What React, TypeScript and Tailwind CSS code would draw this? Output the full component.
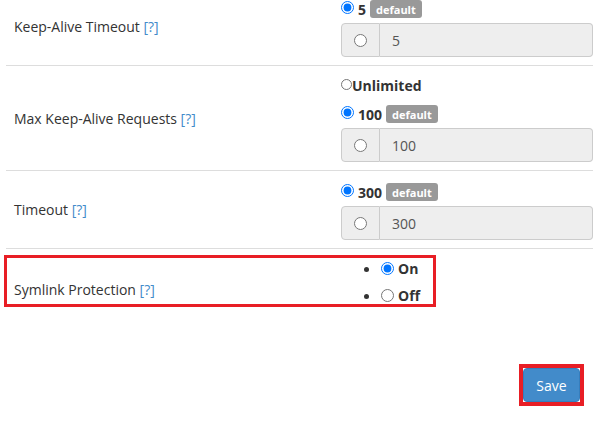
import React from "react";

const font = { fontFamily: '"Open Sans", "Liberation Sans", sans-serif' };

function Help() {
  return <span className="text-[#428bca]">[?]</span>;
}

function Badge() {
  return (
    <span className="ml-[4px] inline-flex h-[18px] items-center rounded-[3px] bg-[#999] px-[6px] text-[11px] font-bold leading-none text-white">
      default
    </span>
  );
}

function DefaultOption({ value, name }: { value: string; name: string }) {
  return (
    <label className="flex h-[20px] items-center text-[14px] font-bold text-[#333]">
      <input
        type="radio"
        name={name}
        defaultChecked
        className="m-0 mr-[4px] mt-[-3px] h-[13px] w-[13px]"
      />
      {value}
      <Badge />
    </label>
  );
}

function CustomInput({ value, name }: { value: string; name: string }) {
  return (
    <div className="mt-[4px] flex h-[34px]">
      <span className="flex w-[39px] items-center justify-center rounded-l-[4px] border border-[#ccc] bg-[#eee]">
        <input type="radio" name={name} className="m-0 h-[13px] w-[13px]" />
      </span>
      <input
        type="text"
        disabled
        defaultValue={value}
        className="min-w-0 flex-1 rounded-r-[4px] border border-l-0 border-[#ccc] bg-[#eee] px-[12px] text-[14px] text-[#555]"
        style={font}
      />
    </div>
  );
}

function Row({
  label,
  children,
  last,
  className = "",
}: {
  label: string;
  children: React.ReactNode;
  last?: boolean;
  className?: string;
}) {
  return (
    <div
      className={`relative flex items-center ${last ? "" : "border-b border-[#ddd]"} ${className}`}
    >
      <div className="w-[335px] shrink-0 pl-[8px] text-[14px] text-[#333]">
        {label} <Help />
      </div>
      <div className="flex-1">{children}</div>
    </div>
  );
}

export default function App() {
  return (
    <div className="h-[426px] overflow-hidden bg-white px-[6px]" style={font}>
      <Row label="Keep-Alive Timeout" className="-mt-[12px]">
        <div className="pb-[8px] pt-[11px]">
          <DefaultOption value="5" name="kat" />
          <CustomInput value="5" name="kat" />
        </div>
      </Row>

      <Row label="Max Keep-Alive Requests">
        <div className="pb-[8px] pt-[9px]">
          <label className="mb-[9px] flex h-[20px] items-center text-[14px] font-bold text-[#333]">
            <input type="radio" name="mkar" className="m-0 mt-[-2px] h-[11px] w-[11px]" />
            Unlimited
          </label>
          <DefaultOption value="100" name="mkar" />
          <CustomInput value="100" name="mkar" />
        </div>
      </Row>

      <Row label="Timeout">
        <div className="pb-[8px] pt-[11px]">
          <DefaultOption value="300" name="to" />
          <CustomInput value="300" name="to" />
        </div>
      </Row>

      <Row label="Symlink Protection" last>
        <ul className="list-disc pb-[20px] pl-[40px] pt-[6px] text-[14px] font-bold text-[#333]">
          <li className="h-[27px]">
            <label className="flex h-[27px] items-center">
              <input
                type="radio"
                name="sym"
                defaultChecked
                className="m-0 mr-[4px] h-[13px] w-[13px]"
              />
              On
            </label>
          </li>
          <li className="h-[27px]">
            <label className="flex h-[27px] items-center">
              <input type="radio" name="sym" className="m-0 mr-[4px] h-[13px] w-[13px]" />
              Off
            </label>
          </li>
        </ul>
        <div className="pointer-events-none absolute left-[-2px] top-[6px] h-[52px] w-[432px] border-[3px] border-[#e81e25]" />
      </Row>

      <div className="mt-[35px] flex justify-end pr-[9px]">
        <div className="border-[4px] border-[#e81e25]">
          <button className="block h-[34px] w-[57px] rounded-[4px] border border-[#357ebd] bg-[#428bca] text-[14px] text-white">
            Save
          </button>
        </div>
      </div>
    </div>
  );
}
